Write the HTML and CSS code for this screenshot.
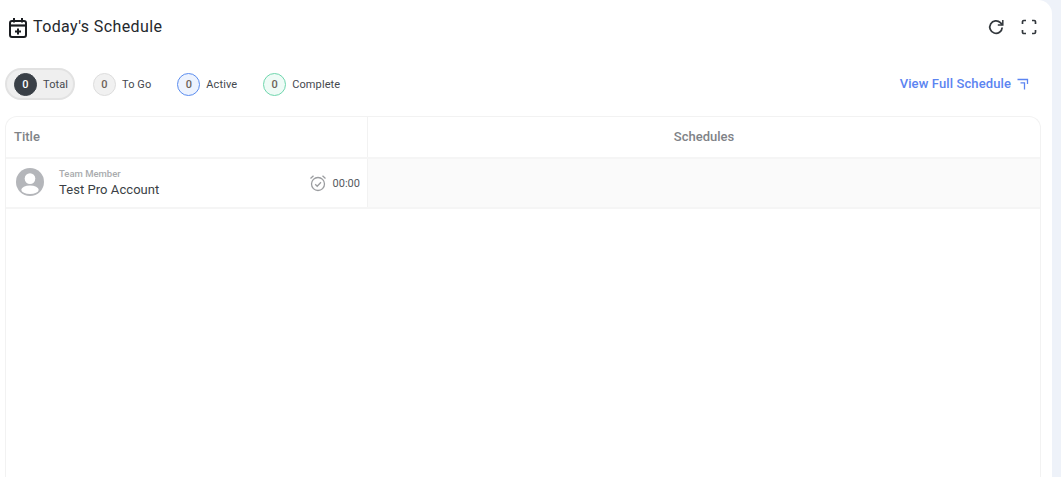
FILE: index.html
```html
<!DOCTYPE html>
<html lang="en">
<head>
<meta charset="utf-8">
<title>Today's Schedule</title>
<link rel="stylesheet" href="styles.css">
</head>
<body>
<main class="card">
  <header class="head">
    <div class="head-title">
      <svg class="cal" width="18" height="20" viewBox="0 0 18 20" fill="none" stroke="#1a1d21" stroke-width="2"><rect x="1" y="3" width="16" height="16" rx="2"/><path d="M1 7.500h16" stroke-width="2.200"/><path d="M5 0v4.500M13 0v4.500"/><path d="M9 10.500v6M6 13.500h6" stroke-width="2"/></svg>
      <h1>Today's Schedule</h1>
    </div>
    <div class="head-tools">
      <svg width="16" height="16" viewBox="0 0 16 16" fill="none" stroke="#33383d" stroke-width="1.800"><path d="M14.200 8.500a6.200 6.200 0 1 1-1.800-4.800L14.500 5.800"/><path d="M14.800 1v5h-5" stroke-width="1.500"/></svg>
      <svg width="16" height="16" viewBox="0 0 16 16" fill="none" stroke="#33383d" stroke-width="1.700"><path d="M1.500 5V2.800c0-.8.5-1.300 1.300-1.300H5M11 1.500h2.200c.8 0 1.300.5 1.300 1.300V5M14.500 11v2.200c0 .8-.5 1.300-1.300 1.300H11M5 14.500H2.800c-.8 0-1.300-.5-1.300-1.300V11"/></svg>
    </div>
  </header>
  <div class="filters">
    <div class="chips">
      <div class="chip chip-on"><span class="count count-total">0</span><span>Total</span></div>
      <div class="chip"><span class="count count-togo">0</span><span>To Go</span></div>
      <div class="chip"><span class="count count-active">0</span><span>Active</span></div>
      <div class="chip"><span class="count count-done">0</span><span>Complete</span></div>
    </div>
    <a class="full-link" href="#">View Full Schedule
      <svg width="12" height="12" viewBox="0 0 12 12" fill="none" stroke="#5b84f1" stroke-width="1.300"><path d="M.5 1.500h10v4.500M3.500 4.800h4v6.700"/></svg>
    </a>
  </div>
  <section class="table">
    <div class="row row-head">
      <div class="cell-title">Title</div>
      <div class="cell-sched">Schedules</div>
    </div>
    <div class="row row-body">
      <div class="cell-person">
        <svg class="avatar" width="28" height="28" viewBox="0 0 29 29"><circle cx="14.500" cy="14.500" r="14.500" fill="#b4b6ba"/><circle cx="14.500" cy="11" r="5.500" fill="#fff"/><ellipse cx="14.500" cy="22.500" rx="9" ry="4.500" fill="#fff"/></svg>
        <div class="person">
          <span class="role">Team Member</span>
          <span class="name">Test Pro Account</span>
        </div>
        <div class="time">
          <svg width="18" height="18" viewBox="0 0 18 18" fill="none" stroke="#9b9da0" stroke-width="1.300"><circle cx="9" cy="10" r="6.500"/><path d="M1.500 4.500 4.500 1.800M16.500 4.500 13.500 1.800M6.200 10.200l2 2 3.800-4"/></svg>
          <span>00:00</span>
        </div>
      </div>
      <div class="cell-track"></div>
    </div>
  </section>
</main>
</body>
</html>
```
FILE: styles.css
```css
* { box-sizing: border-box; }
html, body { margin: 0; height: 477px; overflow: hidden; }
body { background: #eef2f9; font-family: Roboto, "Liberation Sans", sans-serif; color: #3a3f45; }
.card { width: 1052px; height: 477px; background: #fff; border-top-right-radius: 14px; padding: 0 11px 0 5px; overflow: hidden; }
.head { display: flex; justify-content: space-between; align-items: center; height: 53px; padding: 0 3px 0 4px; }
.head-title { display: flex; align-items: center; gap: 6px; }
.cal { margin-top: 2px; }
h1 { margin: 0; font-size: 16px; font-weight: 400; color: #24282d; line-height: 20px; letter-spacing: .4px; }
.head-tools { display: flex; align-items: center; gap: 17px; margin-right: 1px; }
.filters { display: flex; justify-content: space-between; align-items: center; height: 63px; padding: 0 12px 1px 0; }
.chips { display: flex; align-items: center; gap: 26px; }
.chip { display: flex; align-items: center; gap: 6px; font-size: 11px; height: 32px; color: #44484e; letter-spacing: .1px; }
.chip-on { width: 70px; padding-left: 7px; border: 2px solid #e2e2e2; border-radius: 16px; background: #efefef; margin-right: -8px; }
.count { display: flex; align-items: center; justify-content: center; width: 23px; height: 23px; border-radius: 50%; font-size: 11px; font-weight: 500; border: 1px solid #ddd; color: #6d6259; }
.count-total { background: #3a4047; border-color: #3a4047; color: #fff; }
.count-togo { background: #f1f1f1; }
.count-active { background: #edf3fe; border-color: #5b8def; }
.count-done { background: #eefbf6; border-color: #6fd6ad; }
.full-link { display: flex; align-items: center; gap: 6px; color: #5b84f1; font-size: 13px; font-weight: 500; text-decoration: none; letter-spacing: .11px; margin-bottom: 1px; }
.table { border: 1px solid #f2f2f2; border-bottom: 0; border-radius: 12px 12px 0 0; height: 361px; }
.row { display: flex; }
.row-head { height: 42px; border-bottom: 2px solid #f5f5f5; font-size: 13px; font-weight: 500; color: #808387; }
.cell-title { width: 362px; padding: 0 0 1px 8px; display: flex; align-items: center; border-right: 1px solid #f2f2f2; }
.cell-sched { flex: 1; display: flex; align-items: center; justify-content: center; padding-bottom: 1px; }
.row-body { height: 50px; border-bottom: 2px solid #f5f5f5; }
.cell-person { width: 362px; display: flex; align-items: center; padding: 0 7px 0 10px; border-right: 1px solid #f2f2f2; }
.avatar { flex: none; margin-bottom: 2px; }
.person { display: flex; flex-direction: column; margin-left: 15px; flex: 1; margin-top: -1px; }
.role { font-size: 9.500px; font-weight: 500; color: #a9abae; line-height: 13px; margin-bottom: 1px; }
.name { font-size: 13px; color: #3a3f45; line-height: 18px; letter-spacing: .06px; }
.time { display: flex; align-items: center; gap: 6px; font-size: 11px; color: #55595e; }
.cell-track { flex: 1; background: #fafafa; }
```
